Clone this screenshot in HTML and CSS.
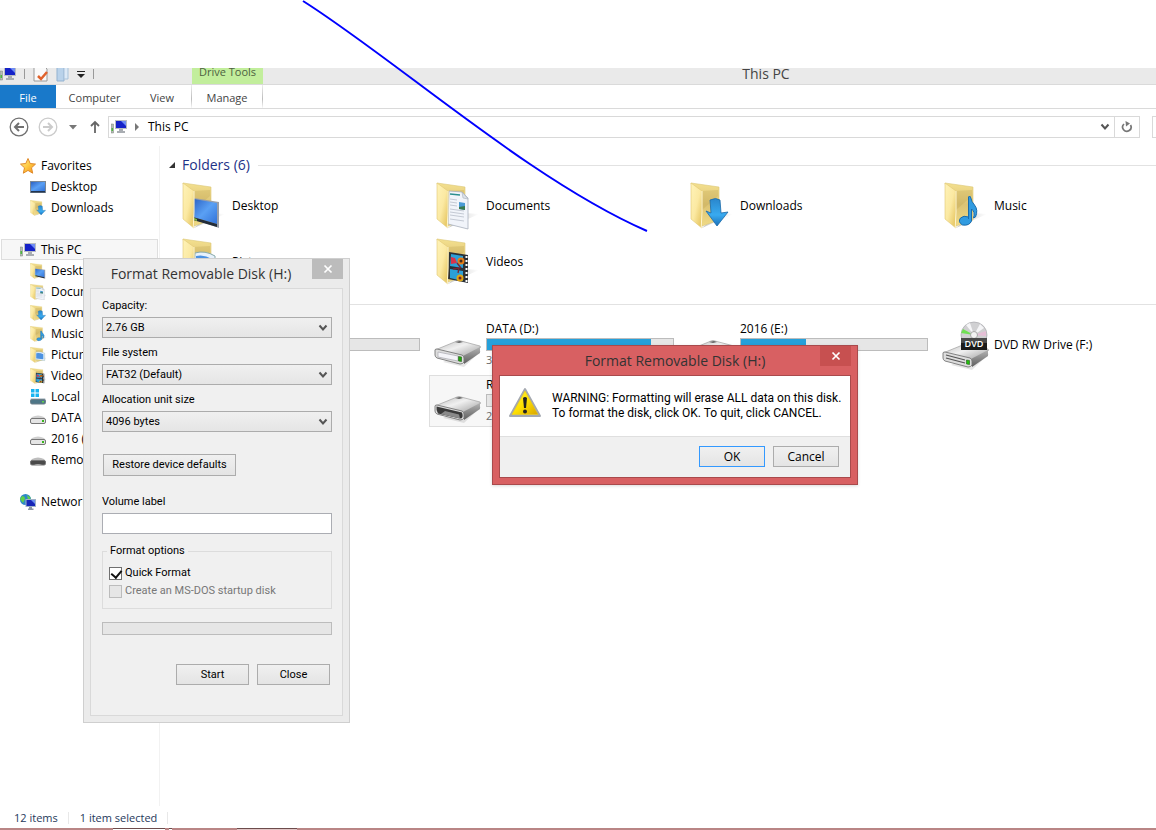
FILE: index.html
```
<!DOCTYPE html>
<html lang="en">
<head>
<meta charset="utf-8">
<title>This PC</title>
<link rel="stylesheet" href="styles.css">
</head>
<body>
<svg class="defs" width="0" height="0" aria-hidden="true">
  <defs>
    <linearGradient id="gFront" x1="0" y1="0" x2="1" y2="1"><stop offset="0" stop-color="#fff3b8"/><stop offset=".5" stop-color="#fbe9a2"/><stop offset="1" stop-color="#e2bf55"/></linearGradient>
    <linearGradient id="gBack" x1="0" y1="0" x2="0" y2="1"><stop offset="0" stop-color="#f4e08f"/><stop offset=".5" stop-color="#dcc374"/><stop offset="1" stop-color="#f0da85"/></linearGradient>
    <linearGradient id="gBlue" x1="0" y1="0" x2="1" y2="1"><stop offset="0" stop-color="#2b62c4"/><stop offset=".5" stop-color="#5aa0f4"/><stop offset="1" stop-color="#3272d8"/></linearGradient>
    <linearGradient id="gArrow" x1="0" y1="0" x2="0" y2="1"><stop offset="0" stop-color="#2a86cc"/><stop offset=".6" stop-color="#38aaf0"/><stop offset="1" stop-color="#1b6fb8"/></linearGradient>
    <linearGradient id="gMetal" x1="0" y1="0" x2="1" y2="1"><stop offset="0" stop-color="#b8b8b8"/><stop offset=".45" stop-color="#f0f0f0"/><stop offset="1" stop-color="#9a9a9a"/></linearGradient>
    <linearGradient id="gSide" x1="0" y1="0" x2="0" y2="1"><stop offset="0" stop-color="#b4b4b4"/><stop offset="1" stop-color="#5e5e5e"/></linearGradient>
    <linearGradient id="gWarn" x1="0" y1="0" x2="1" y2="1"><stop offset="0" stop-color="#fff04a"/><stop offset=".5" stop-color="#ffe100"/><stop offset="1" stop-color="#d9a400"/></linearGradient>
    <linearGradient id="gStar" x1="0" y1="0" x2="1" y2="1"><stop offset="0" stop-color="#fff2a0"/><stop offset=".5" stop-color="#ffc940"/><stop offset="1" stop-color="#f08a1a"/></linearGradient>
    <linearGradient id="gShade" x1="0" y1="0" x2="1" y2="0"><stop offset="0" stop-color="#000" stop-opacity=".22"/><stop offset="1" stop-color="#000" stop-opacity="0"/></linearGradient>

    <symbol id="folder" viewBox="0 0 48 48">
      <path d="M15 46 46 32 31 31z" fill="url(#gShade)"/>
      <path d="M4 1 32 5v33L15 44z" fill="url(#gBack)" stroke="#dcc777" stroke-width=".6"/>
      <path d="M15 9 31 8v6L15 28z" fill="#b89a48" opacity=".25"/>
    </symbol>
    <symbol id="flap" viewBox="0 0 48 48"><path d="M4 1 15 9l-.5 22 .3 15L4 37z" fill="url(#gFront)" stroke="#e0c873" stroke-width=".6"/><path d="M15 9v21l-.8 16" fill="none" stroke="#fff6cf"/></symbol>
    <symbol id="arrowdn" viewBox="0 0 48 48"><path d="M23 18q6-3 10 0l1 13 7-1-11 14L19 29l5 2z" fill="url(#gArrow)" stroke="#1b6aa8" stroke-width=".8"/></symbol>
    <symbol id="note" viewBox="0 0 48 48"><path d="M27.500 37V15q1-2 2 0 1 5 4 8 4 5 1 12l-2 1q2-6-2-9v12q-2 5-9 4-5-3-2-7 3-3 8-1z" fill="#319be0" stroke="#1b6cab"/></symbol>
    <symbol id="screen" viewBox="0 0 48 48"><path d="M15 16 40 20v26L14 37z" fill="#9a9fa8"/><path d="M15 17 38 21v21L14 35z" fill="url(#gBlue)"/><path d="M14 35 38 42v3L14 38z" fill="#232c38"/><path d="M15 36l3 1v2l-3-1z" fill="#7db53c"/></symbol>
    <symbol id="docs" viewBox="0 0 48 48"><path d="M16 9 29 10l6 6v31L15 42z" fill="#f1f4fa" stroke="#a8b0bc" stroke-width=".8"/><path d="m29 10 6 7-5-1z" fill="#dde3ea" stroke="#a8b0bc" stroke-width=".6"/><path d="m17 12 10 1" stroke="#2c8f8f" stroke-width="1.500"/><path d="M26 20l6 1v7l-6-1z" fill="#4a9bd5"/><path d="m26 25 6-1v4l-6-1z" fill="#397a50"/><path d="m17 17 7 1m-7 2 7 1m-7 2 7 1m-7 3 14 2m-14 1 14 2m-14 1 14 2m-14 2 14 2" stroke="#c4cad4"/></symbol>
    <symbol id="film" viewBox="0 0 48 48"><path d="M16 14 35 17v28l-20-4z" fill="#2b3036"/><path d="m18 16 12 2v12l-13-2zm-1 15 13 2v10l-13-3z" fill="#2ba0d8"/><circle cx="28" cy="23" r="3.500" fill="#e67e16"/><circle cx="28" cy="23" r="1.500" fill="#452a1c"/><path d="M18 19l4 1 2 5-6 1z" fill="#d8334b"/><circle cx="27" cy="40" r="3.500" fill="#e0a412"/><circle cx="27" cy="40" r="1.500" fill="#702030"/><path d="m20 31 6-1-1 5m-1-10 4 5" stroke="#782434" stroke-width="1.300" fill="none"/><path d="M33.500 18v26" stroke="#fff" stroke-width="2" stroke-dasharray="2 2"/></symbol>
    <symbol id="picture" viewBox="0 0 48 48"><path d="M16 15q10-3 20 3v22l-21-3z" fill="#e8f2fc" stroke="#8aa"/><path d="M17 18q8-2 16 3v15l-16-2z" fill="#4c92e2"/></symbol>

    <symbol id="m-downloads" viewBox="3 0 39 47" preserveAspectRatio="none"><use href="#folder" width="48" height="48"/><use href="#arrowdn" width="48" height="48"/><use href="#flap" width="48" height="48"/></symbol>
    <symbol id="m-desktop" viewBox="3 0 39 47" preserveAspectRatio="none"><use href="#folder" width="48" height="48"/><use href="#screen" width="48" height="48"/><use href="#flap" width="48" height="48"/></symbol>
    <symbol id="m-docs" viewBox="3 0 36 47" preserveAspectRatio="none"><use href="#folder" width="48" height="48"/><use href="#docs" width="48" height="48"/><use href="#flap" width="48" height="48"/></symbol>
    <symbol id="m-music" viewBox="3 0 37 47" preserveAspectRatio="none"><use href="#folder" width="48" height="48"/><use href="#note" width="48" height="48"/><use href="#flap" width="48" height="48"/></symbol>
    <symbol id="m-pics" viewBox="3 0 36 47" preserveAspectRatio="none"><use href="#folder" width="48" height="48"/><use href="#picture" width="48" height="48"/><use href="#flap" width="48" height="48"/></symbol>
    <symbol id="m-videos" viewBox="3 0 36 47" preserveAspectRatio="none"><use href="#folder" width="48" height="48"/><use href="#film" width="48" height="48"/><use href="#flap" width="48" height="48"/></symbol>

    <symbol id="pc" viewBox="0 0 16 16"><path d="M0 5h2.500v9H0z" fill="#b5bdb5" stroke="#7d857d" stroke-width=".5"/><path d="M.500 9h1.500v3H.500z" fill="#4cb83e"/><path d="M4 1h12v9H4z" fill="#b8bcc2"/><path d="M5 2h10v7H5z" fill="#1522c8"/><path d="M10 2h5v5z" fill="#6f8cf4"/><path d="M8 10h4v2h2v2H6v-2h2z" fill="#a9adb2"/></symbol>
    <symbol id="desk" viewBox="0 0 16 16"><path d="M0 2h16v12H0z" fill="#7b8794"/><path d="M1 3h14v9H1z" fill="url(#gBlue)"/><path d="M1 12h14v1.500H1z" fill="#22344e"/></symbol>
    <symbol id="minidrive" viewBox="0 0 16 16"><path d="M2 7q6-3 12 0l2 3H0z" fill="#cfcfcf"/><rect x=".5" y="8.500" width="15" height="5" rx="1.500" fill="#e5e5e5" stroke="#777"/><path d="M12 10h2v2h-2z" fill="#37b51c"/></symbol>
    <symbol id="miniusb" viewBox="0 0 16 16"><path d="M2 7q6-3 12 0l2 3H0z" fill="#bdbdbd"/><rect x=".5" y="8.500" width="15" height="4.500" rx="1.500" fill="#4a4a4a" stroke="#777"/><path d="M4 13q4-2 8 0z" fill="#aaa"/></symbol>
    <symbol id="localdisk" viewBox="0 0 16 16"><path d="M1 0h3.500v3.500H1zM5.500 0H9v3.500H5.500zM1 4.500h3.500V8H1zM5.500 4.500H9V8H5.500z" fill="#18b4f0"/><path d="M1 9h14l1 2H0z" fill="#c8d2d8"/><rect x=".5" y="10.500" width="15" height="4.500" rx="1.500" fill="#4e7687" stroke="#6c7f88"/><path d="M12 12h2v1.500h-2z" fill="#62d04a"/></symbol>
    <symbol id="drive" viewBox="0 0 48 48">
      <path d="M10 41 31 46 48 30 38 27z" fill="#000" opacity=".1"/>
      <path d="M2 29 24 20q2-1 4 0l19 5q1 1 0 2L31 36z" fill="url(#gMetal)" stroke="#a0a0a0" stroke-width=".7"/>
      <path d="M30 35 47 26v6L31 43z" fill="url(#gSide)"/>
      <path d="M2 29q0-1 2-1l25 6q2 1 2 3v4q-1 2-4 2L4 37q-2-1-2-3z" fill="#ddd" stroke="#777" stroke-width=".9"/>
      <path d="m22 21 5-1 3 1-4 1z" fill="#666"/>
    </symbol>
    <symbol id="hdd" viewBox="0 0 48 48"><use href="#drive"/><path d="M5 31 25 35v5L5 36z" fill="#f4f4f8" stroke="#a9a9b0" stroke-width=".7"/><path d="m25.500 35.500 3 .5v4.500l-3-.5z" fill="#23a80c" stroke="#275a1c" stroke-width=".6"/></symbol>
    <symbol id="usb" viewBox="0 0 48 48"><use href="#drive"/><path d="M3.500 29.500 29 35.500q2 6-2 6L5 36.500q-2-3-1.500-7z" fill="#3a3a3a"/><path d="m8 37 4-3 14 3.500 1 4z" fill="#8a8a8a"/></symbol>
    <symbol id="dvd" viewBox="0 0 48 52"><g transform="translate(0 5)"><use href="#drive" width="48" height="48"/><path d="m5 31 19 5m-19-2 19 5" stroke="#555" stroke-width="1.200"/><path d="m25.500 36 3 .5v4l-3-.5z" fill="#23c20c" stroke="#275a1c" stroke-width=".6"/></g>
      <circle cx="33" cy="16" r="13" fill="#d0d0d2" stroke="#a8a8ac" stroke-width=".7"/><path d="M33 16 22 10l-2 4z" fill="#70df54"/><path d="m33 16 6-11 4 4z" fill="#f5f5f7"/><path d="m33 16 12-4v5z" fill="#e5bfd6"/><path d="m33 16-8-10 4-2z" fill="#f6f6f8"/><circle cx="33" cy="16" r="3.500" fill="#f3f3f3" stroke="#a8a8a8"/>
      <path d="M20 19h26v12H20z" fill="#1b1b1b"/><path d="M20 19h26v5H20z" fill="#4a4a4a"/><text x="33" y="28" class="dvd-text" text-anchor="middle">DVD</text></symbol>
    <symbol id="chev" viewBox="0 0 10 8"><path d="m1.500 1.500 3.500 4 3.500-4" fill="none" stroke="#555" stroke-width="2"/></symbol>
    <symbol id="cross" viewBox="0 0 10 10"><path d="m1.500 1.500 7 7m0-7-7 7" stroke="#fff" stroke-width="1.700"/></symbol>
  </defs>
</svg>

<div class="explorer">
  <header class="titlebar">
    <div class="quick">
      <svg width="16" height="16"><use href="#pc"/></svg>
      <span class="sep"></span>
      <svg width="16" height="16" viewBox="0 0 16 16"><path d="M1 0h10l3 3v12H1z" fill="#fafafa" stroke="#9a9a9a"/><path d="m5 10 3 3 6-7" fill="none" stroke="#e0622c" stroke-width="2.500"/></svg>
      <svg width="14" height="16" viewBox="0 0 14 16"><path d="M1 0h7v15H1z" fill="#b9d2ea" stroke="#93b2d0"/><path d="M8 1h4v12H8z" fill="#dce9f6" stroke="#a9c2da"/></svg>
      <svg width="8" height="8" viewBox="0 0 8 8"><path d="M0 1.500h8" stroke="#222"/><path d="M0 4h8L4 8z" fill="#222"/></svg>
      <span class="sep"></span>
    </div>
    <div class="context-tab">Drive Tools</div>
    <h1>This PC</h1>
  </header>
  <nav class="ribbon">
    <button class="file">File</button>
    <button class="tab tab-computer">Computer</button>
    <button class="tab tab-view">View</button>
    <button class="tab tab-manage">Manage</button>
  </nav>
  <div class="address">
    <div class="nav-icons">
      <svg width="20" height="20" viewBox="0 0 20 20" fill="none" stroke="#707070"><circle cx="10" cy="10" r="8.800" stroke-width="1.300"/><path d="M15 10H6m4-4-4 4 4 4" stroke-width="2"/></svg>
      <svg width="20" height="20" viewBox="0 0 20 20" fill="none" stroke="#cbcbcb"><circle cx="10" cy="10" r="8.800" stroke-width="1.300"/><path d="M5 10h9m-4-4 4 4-4 4" stroke-width="2"/></svg>
      <svg width="8" height="5" viewBox="0 0 8 5"><path d="M0 0h8L4 4.500z" fill="#777"/></svg>
      <svg width="10" height="14" viewBox="0 0 10 14"><path d="M5 13V2M1 6l4-4 4 4" fill="none" stroke="#666" stroke-width="1.800"/></svg>
    </div>
    <div class="path">
      <svg width="16" height="16"><use href="#pc"/></svg>
      <svg width="5" height="8" viewBox="0 0 5 8"><path d="M0 0v8l4-4z" fill="#777"/></svg>
      <span class="crumb">This PC</span>
      <svg width="10" height="8"><use href="#chev"/></svg>
      <button class="refresh" aria-label="Refresh"><svg width="12" height="12" viewBox="0 0 12 12"><path d="M3 3A4.200 4.200 0 1 0 9.500 4" fill="none" stroke="#777" stroke-width="1.700"/><path d="M4.500 0 9 2.500 5 5.500z" fill="#777"/></svg></button>
    </div>
    <div class="search"></div>
  </div>

  <div class="main">
    <aside class="tree">
      <div class="node root"><svg width="16" height="16" viewBox="0 0 16 16"><path d="m8 .5 2.200 5 5.300.6-4 3.700 1.200 5.400L8 12.400l-4.700 2.800 1.200-5.400-4-3.700 5.300-.6z" fill="url(#gStar)" stroke="#e08a2a"/></svg>Favorites</div>
      <div class="node"><svg width="16" height="16"><use href="#desk"/></svg>Desktop</div>
      <div class="node"><svg width="16" height="16"><use href="#m-downloads"/></svg>Downloads</div>
      <div class="node"></div>
      <div class="node root current"><svg width="16" height="16"><use href="#pc"/></svg>This PC</div>
      <div class="node"><svg width="16" height="16"><use href="#m-desktop"/></svg>Desktop</div>
      <div class="node"><svg width="16" height="16"><use href="#m-docs"/></svg>Documents</div>
      <div class="node"><svg width="16" height="16"><use href="#m-downloads"/></svg>Downloads</div>
      <div class="node"><svg width="16" height="16"><use href="#m-music"/></svg>Music</div>
      <div class="node"><svg width="16" height="16"><use href="#m-pics"/></svg>Pictures</div>
      <div class="node"><svg width="16" height="16"><use href="#m-videos"/></svg>Videos</div>
      <div class="node"><svg width="16" height="16"><use href="#localdisk"/></svg>Local</div>
      <div class="node"><svg width="16" height="16"><use href="#minidrive"/></svg>DATA</div>
      <div class="node"><svg width="16" height="16"><use href="#minidrive"/></svg>2016 (E:)</div>
      <div class="node"><svg width="16" height="16"><use href="#miniusb"/></svg>Remov</div>
      <div class="node"></div>
      <div class="node root"><svg width="16" height="16" viewBox="0 0 16 16"><circle cx="5.500" cy="5.500" r="5.500" fill="#2e86c8"/><path d="M2 2q3 0 3 3l-2 4-3-4zm5-1 4 3-3 2z" fill="#5fd04a"/><path d="M5.500 5H16v8H5.500z" fill="#9fb3c8"/><path d="M6.500 6H15v6H6.500z" fill="#1626b8"/><path d="m11 6h4v4z" fill="#6d92f0"/><path d="M9 13h3v1.500h1.500V16H8v-1.500h1z" fill="#8c98a6"/></svg>Network</div>
    </aside>

    <main class="content">
      <h2 class="group"><svg width="8" height="8" viewBox="0 0 8 8"><path d="M7 1v6H1z" fill="#333"/></svg>Folders (6)</h2>
      <div class="grid folders">
        <div class="tile"><svg width="48" height="48"><use href="#folder"/><use href="#screen"/><use href="#flap"/></svg>Desktop</div>
        <div class="tile"><svg width="48" height="48"><use href="#folder"/><use href="#docs"/><use href="#flap"/></svg>Documents</div>
        <div class="tile"><svg width="48" height="48"><use href="#folder"/><use href="#arrowdn"/><use href="#flap"/></svg>Downloads</div>
        <div class="tile"><svg width="48" height="48"><use href="#folder"/><use href="#note"/><use href="#flap"/></svg>Music</div>
        <div class="tile"><svg width="48" height="48"><use href="#folder"/><use href="#picture"/><use href="#flap"/></svg>Pictures</div>
        <div class="tile"><svg width="48" height="48"><use href="#folder"/><use href="#film"/><use href="#flap"/></svg>Videos</div>
      </div>
      <hr class="divider">
      <div class="grid drives">
        <div class="tile"><svg width="48" height="48"><use href="#hdd"/></svg><div class="info"><span></span><span class="bar"></span><small></small></div></div>
        <div class="tile"><svg width="48" height="48"><use href="#hdd"/></svg><div class="info"><span>DATA (D:)</span><span class="bar"><i style="width:88%"></i></span><small>3</small></div></div>
        <div class="tile"><svg width="48" height="48"><use href="#hdd"/></svg><div class="info"><span>2016 (E:)</span><span class="bar"><i style="width:35%"></i></span><small></small></div></div>
        <div class="tile"><svg width="48" height="52"><use href="#dvd"/></svg>DVD RW Drive (F:)</div>
        <div class="tile blank"></div>
        <div class="tile selected"><svg width="48" height="48"><use href="#usb"/></svg><div class="info"><span>R</span><span class="bar"></span><small>2</small></div></div>
      </div>
    </main>
  </div>

  <footer class="status"><span>12 items</span><span>1 item selected</span></footer>
  <div class="taskbar"><i></i><i></i><i></i></div>
</div>

<form class="window format">
  <div class="caption"><h2>Format Removable Disk (H:)</h2><button type="button" class="close" aria-label="Close window"><svg width="10" height="10"><use href="#cross"/></svg></button></div>
  <div class="body">
    <label for="cap">Capacity:</label>
    <div class="combo"><select id="cap"><option>2.76 GB</option></select><svg width="10" height="8"><use href="#chev"/></svg></div>
    <label for="fs">File system</label>
    <div class="combo"><select id="fs"><option>FAT32 (Default)</option></select><svg width="10" height="8"><use href="#chev"/></svg></div>
    <label for="au">Allocation unit size</label>
    <div class="combo"><select id="au"><option>4096 bytes</option></select><svg width="10" height="8"><use href="#chev"/></svg></div>
    <button type="button" class="btn restore">Restore device defaults</button>
    <label for="vol">Volume label</label>
    <input id="vol" class="text" type="text">
    <fieldset>
      <legend>Format options</legend>
      <div class="check"><input id="quick" type="checkbox" checked><label for="quick">Quick Format</label></div>
      <div class="check off"><input id="dos" type="checkbox" disabled><label for="dos">Create an MS-DOS startup disk</label></div>
    </fieldset>
    <div class="progress" role="progressbar" aria-label="Format progress"></div>
    <div class="actions"><button type="button" class="btn">Start</button><button type="button" class="btn">Close</button></div>
  </div>
</form>

<section class="window alert" role="alertdialog" aria-labelledby="alert-title">
  <div class="caption"><h2 id="alert-title">Format Removable Disk (H:)</h2><button type="button" class="close" aria-label="Close alert"><svg width="10" height="10"><use href="#cross"/></svg></button></div>
  <div class="body">
    <div class="message">
      <svg width="32" height="32" viewBox="0 0 32 32"><path d="M16 2 31 29H1z" fill="#c9cdd4" stroke="#a4a8b0" stroke-width="2" stroke-linejoin="round"/><path d="M16 4 29 27.500H3z" fill="url(#gWarn)" stroke="#e8c400" stroke-width=".5" stroke-linejoin="round"/><path d="M14 11q2-2 4 0l-1 10h-2z" fill="#222"/><circle cx="16" cy="24.500" r="2" fill="#222"/></svg>
      <p>WARNING: Formatting will erase ALL data on this disk.<br>To format the disk, click OK. To quit, click CANCEL.</p>
    </div>
    <div class="buttons"><button type="button" class="btn primary">OK</button><button type="button" class="btn">Cancel</button></div>
  </div>
</section>

<svg class="stroke" width="350" height="236" viewBox="300 0 350 236" aria-hidden="true"><path d="M303 1C395 59 530 180 647 231" fill="none" stroke="#0000ff" stroke-width="2"/></svg>
</body>
</html>
```

FILE: styles.css
```
* { box-sizing: border-box; }
body {
  margin: 0;
  min-height: 100vh;
  background: #fff;
  color: #000;
  font: 12px/16px "Open Sans", "Noto Sans", sans-serif;
}
button, input, select { font: inherit; color: inherit; margin: 0; border-radius: 0; }
svg { flex: none; display: block; }
h1, h2, p { margin: 0; font-weight: normal; }
.defs { position: absolute; }
.dvd-text { font: 600 9px "Open Sans", sans-serif; fill: #fff; }

.explorer {
  display: flex;
  flex-direction: column;
  min-height: 100vh;
  padding-top: 68px;
}
.titlebar {
  display: flex;
  height: 17px;
  overflow: hidden;
  background: #eaeaea;
  border-bottom: 1px solid #dadada;
  color: #444;
}
.quick { display: flex; width: 192px; align-items: center; gap: 8px; padding-bottom: 4px; }
.quick .sep { width: 1px; height: 10px; background: #999; }
.quick svg + svg { margin-left: -1px; }
.context-tab {
  width: 71px;
  line-height: 8px;
  background: #c2ee9c;
  text-align: center;
  color: #4d6141;
  font-size: 11px;
}
.titlebar h1 { flex: 1; padding-left: 113px; text-align: center; font-size: 14px; line-height: 12px; }
.ribbon { display: flex; height: 24px; border-bottom: 1px solid #dadada; }
.ribbon button { border: 0; padding: 2px 0 0; background: none; font-size: 11px; color: #444; }
.ribbon .file { width: 56px; background: #1979ca; color: #fff; }
.ribbon .tab-computer { width: 77px; }
.ribbon .tab-view { width: 58px; }
.ribbon .tab-manage { width: 72px; border: solid; border-width: 0 1px; border-image: linear-gradient(#f0f0f0, #bdbdbd 60%, #fff) 1; }
.address { display: flex; height: 37px; padding-top: 7px; }
.nav-icons { display: flex; width: 108px; height: 22px; padding-left: 9px; align-items: center; gap: 9px; }
.nav-icons svg:nth-child(3) { margin-left: 2px; }
.nav-icons svg:nth-child(4) { margin-left: 4px; }
.path { display: flex; flex: 1; height: 22px; padding-left: 2px; align-items: center; gap: 8px; border: 1px solid #d9d9d9; }
.path .crumb { flex: 1; }
.path .refresh { display: grid; place-items: center; width: 25px; align-self: stretch; padding: 0; background: none; border: 0; border-left: 1px solid #d9d9d9; margin-left: -4px; }
.search { width: 4px; height: 22px; margin-left: 12px; border: 1px solid #d9d9d9; border-right: 0; }

.main { display: flex; flex: 1; }
.tree { width: 160px; padding: 9px 1px 0; border-right: 1px solid #f2f2f2; }
.node { display: flex; height: 21px; padding-left: 29px; align-items: center; gap: 5px; white-space: nowrap; overflow: hidden; }
.node.root { padding-left: 19px; }
.node.current { padding-left: 18px; background: #f7f7f7; border: 1px solid #dedede; }

.content { flex: 1; padding: 8px 0 0 15px; overflow: hidden; }
.group { display: flex; align-items: center; gap: 6px; height: 22px; margin-left: -7px; font-size: 14px; color: #1e3287; }
.group::after { content: ""; flex: 1; height: 1px; background: #e2e2e2; margin-left: 2px; }
.grid { display: grid; grid-template-columns: repeat(4, 254px); }
.folders { padding-top: 2px; }
.tile { display: flex; height: 56px; align-items: center; gap: 5px; padding-left: 4px; }
.divider { height: 1px; margin: 14px 0 0 0; border: 0; background: #e2e2e2; }
.drives { padding-top: 12px; }
.drives .tile { height: 52px; margin: 2px 0; border: 1px solid transparent; padding-left: 3px; }
.drives .selected { background: #f7f7f7; border-color: #dedede; }
.info { display: grid; grid-template-rows: 16px 13px 18px; width: 188px; }
.info > span:first-child { line-height: 14px; }
.info small { line-height: 18px; }
.bar { display: block; border: 1px solid #bcbcbc; background: #e6e6e6; }
.bar i { display: block; height: 100%; background: #26a0da; }
.info small { font-size: 11px; color: #6d6d6d; }

.status { display: flex; height: 22px; padding: 2px 0 0 14px; align-items: center; color: #1e395b; font-size: 11px; }
.status span { line-height: 12px; padding-right: 10px; margin-right: 11px; border-right: 1px solid #e8e8e8; }
.taskbar { display: flex; height: 2px; padding-left: 113px; background: #b98585; }
.taskbar i { width: 52px; margin-right: 4px; background: #fff; border-top: 1px solid #6c4c4c; }
.taskbar i:nth-child(2) { width: 3px; }
.taskbar i:nth-child(3) { width: 60px; margin-left: 61px; background: #e3c5c5; }

.window { position: absolute; border: 1px solid; padding: 0 6px 6px; }
.caption { display: flex; height: 29px; }
.caption h2 { flex: 1; text-align: center; font: 14px/29px "Open Sans", sans-serif; color: #333; white-space: nowrap; }
.close { display: grid; place-items: center; width: 31px; height: 20px; padding: 0; border: 0; background: #bcbcbc; }
.btn {
  height: 22px;
  padding: 0;
  border: 1px solid #acacac;
  background: linear-gradient(#f0f0f0, #e4e4e4);
}
.format { left: 83px; top: 258px; width: 267px; background: #ebebeb; border-color: #cfcfcf; font-family: Roboto, sans-serif; font-size: 11px; }
.format .body { display: flex; flex-direction: column; padding: 9px 10px 30px 11px; border: 1px solid #d9d9d9; background: #f0f0f0; }
.format .body > label { line-height: 16px; margin-bottom: 3px; }
.combo { position: relative; margin-bottom: 7px; }
.combo select { display: block; width: 100%; height: 21px; padding: 0 3px; appearance: none; border: 1px solid #acacac; background: linear-gradient(#f0f0f0, #e5e5e5); }
.combo svg { position: absolute; right: 4px; top: 7px; }
.restore { width: 133px; margin: 15px 0 18px 1px; }
.format .text { height: 21px; border: 1px solid #abadb3; background: #fff; padding: 0 3px; }
fieldset { margin: 9px 0 13px; padding: 5px 7px 8px 6px; border: 1px solid #dcdcdc; min-width: 0; }
legend { padding: 0 3px; margin-left: -2px; line-height: 16px; }
.check { display: flex; height: 18px; align-items: center; gap: 3px; white-space: nowrap; }
.check input { position: relative; width: 13px; height: 13px; appearance: none; border: 1px solid #707070; background: #fff; }
.check input:checked::after { content: ""; position: absolute; left: 3px; top: 0; width: 5px; height: 8px; border: solid #111; border-width: 0 2px 2px 0; transform: rotate(40deg); }
.check.off { color: #777; }
.check.off input { border-color: #bcbcbc; background: #e6e6e6; }
.progress { height: 13px; border: 1px solid #bcbcbc; background: #e6e6e6; }
.actions { display: flex; justify-content: flex-end; gap: 8px; margin: 29px 2px 0 0; }
.actions .btn { width: 73px; height: 21px; }

.alert { left: 492px; top: 345px; width: 366px; background: #d86062; border-color: #a94a4c; box-shadow: 0 1px 3px rgba(0, 0, 0, .15); }
.alert .caption h2 { padding-left: 31px; }
.alert .close { background: #c75050; }
.alert .body { border: 1px solid #a94a4c; background: #fff; }
.message { display: flex; gap: 11px; height: 60px; padding: 11px 0 0 9px; }
.message p { line-height: 15px; padding-top: 4px; white-space: nowrap; font-family: Roboto, sans-serif; font-size: 12px; }
.buttons { display: flex; justify-content: flex-end; gap: 8px; padding: 9px 11px 10px; background: #f0f0f0; border-top: 1px solid #dfdfdf; }
.buttons .btn { width: 66px; height: 21px; }
.buttons .primary { border-color: #3399ff; }

.stroke { position: absolute; left: 300px; top: 0; pointer-events: none; }
```
